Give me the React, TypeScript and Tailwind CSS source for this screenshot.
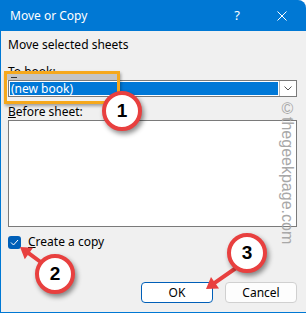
import React from 'react';

const FONT = '"Noto Sans", "Open Sans", Arial, sans-serif';

function Marker({ n, className }: { n: string; className: string }) {
  return (
    <div
      className={`absolute flex h-[40px] w-[40px] items-center justify-center rounded-full border-[4px] border-[#e8403f] bg-white shadow-[2px_3px_5px_rgba(0,0,0,0.45)] ${className}`}
    >
      <span className="font-['Liberation_Sans',Arial,sans-serif] text-[19px] font-bold text-black">{n}</span>
    </div>
  );
}

function Arrow({ x1, y1, x2, y2 }: { x1: number; y1: number; x2: number; y2: number }) {
  const a = Math.atan2(y2 - y1, x2 - x1);
  const len = 11;
  const w = 7;
  const bx = x2 - len * Math.cos(a);
  const by = y2 - len * Math.sin(a);
  const px = -Math.sin(a) * w;
  const py = Math.cos(a) * w;
  return (
    <g>
      <line x1={x1} y1={y1} x2={bx} y2={by} stroke="#e8403f" strokeWidth={4} strokeLinecap="round" />
      <polygon points={`${x2},${y2} ${bx + px},${by + py} ${bx - px},${by - py}`} fill="#e8403f" />
    </g>
  );
}

export default function App() {
  return (
    <div className="relative h-[313px] w-[306px] overflow-hidden bg-white" style={{ fontFamily: FONT }}>
      <div className="flex h-full w-full flex-col overflow-hidden rounded-tr-[8px] border-b border-l border-[#0078d4] bg-[#f0f0f0]">
        {/* title bar */}
        <div className="flex h-[31px] shrink-0 items-center bg-[#0078d4] pl-[9px] text-[12px] text-white">
          <span className="flex-1">Move or Copy</span>
          <span className="w-[10px] text-center text-[13px]">?</span>
          <svg className="ml-[35px] mr-[19px]" width="10" height="10" viewBox="0 0 10 10">
            <path d="M0.5 0.5L9.5 9.5M9.5 0.5L0.5 9.5" stroke="white" strokeWidth="1" />
          </svg>
        </div>

        <div className="flex flex-1 flex-col px-[7px] text-[12px] text-black">
          <div className="mt-[6px] leading-[16px]">Move selected sheets</div>
          <div className="mt-[11px] leading-[16px]">
            <span className="underline">T</span>o book:
          </div>
          <div className="flex h-[17px] w-[289px] border border-[#7a7a7a] bg-white">
            <div className="m-[1px] flex flex-1 items-center bg-[#0078d7] pl-[1px] leading-none text-white">(new book)</div>
            <div className="flex w-[17px] items-center justify-center border-l border-[#b5b5b5] bg-white">
              <svg width="8" height="5" viewBox="0 0 8 5">
                <path d="M0.5 0.5L4 4L7.5 0.5" stroke="#555" fill="none" strokeWidth="1" />
              </svg>
            </div>
          </div>
          <div className="mt-[7px] leading-[16px]">
            <span className="underline">B</span>efore sheet:
          </div>
          <div className="h-[107px] w-[289px] border border-[#7a7a7a] bg-white" />
          <div className="mt-[7px] flex items-center leading-[16px]">
            <div className="flex h-[13px] w-[13px] items-center justify-center rounded-[3px] bg-[#005fb8]">
              <svg width="9" height="7" viewBox="0 0 9 7">
                <path d="M1 3.5L3.5 6L8 1" stroke="white" fill="none" strokeWidth="1" />
              </svg>
            </div>
            <span className="ml-[7px]">
              <span className="underline">C</span>reate a copy
            </span>
          </div>
          <div className="mb-[9px] mt-auto flex justify-end gap-[12px] pr-[2px]">
            <button className="h-[21px] w-[72px] rounded-[4px] border border-[#005fb8] bg-white text-[12px]">OK</button>
            <button className="h-[21px] w-[72px] rounded-[4px] border border-[#d0d0d0] bg-[#fdfdfd] text-[12px]">Cancel</button>
          </div>
        </div>
      </div>

      {/* watermark */}
      <div className="absolute left-[278px] top-[100px] whitespace-nowrap font-['Liberation_Sans',Arial,sans-serif] text-[16px] leading-[18px] text-[#a8a8a8] [writing-mode:vertical-rl]">
        ©thegeekpage.com
      </div>

      {/* highlight */}
      <div className="absolute left-[4px] top-[71px] h-[33px] w-[116px] border-[3px] border-[#f5a81c] shadow-[1px_2px_3px_rgba(0,0,0,0.35)]">
        <div className="flex h-[6px] items-center bg-[#c4c4c4] pl-[4px]">
          <div className="h-[1px] w-[6px] bg-[#333]" />
        </div>
      </div>

      <svg className="absolute left-0 top-0" width="306" height="313">
        <Arrow x1={42} y1={263} x2={20} y2={247} />
        <Arrow x1={236} y1={268} x2={206} y2={289} />
      </svg>

      <Marker n="1" className="left-[102px] top-[91px]" />
      <Marker n="2" className="left-[35px] top-[254px] h-[38px] w-[38px]" />
      <Marker n="3" className="left-[227px] top-[233px]" />
    </div>
  );
}
